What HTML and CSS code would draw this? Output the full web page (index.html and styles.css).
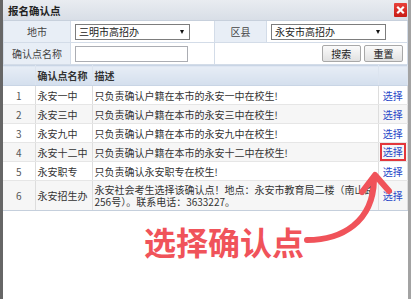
FILE: index.html
```html
<!DOCTYPE html>
<html lang="zh-CN">

<head>
    <meta charset="UTF-8">
    <title>报名确认点</title>
    <link rel="stylesheet" href="styles.css">
</head>

<body>
    <div class="dialog">
        <div class="title-bar">
            <span class="title">报名确认点</span>
            <span class="close">
                <svg width="13" height="14" viewBox="0 0 13 14">
                    <path d="M4 4.5 L9 9.5 M9 4.5 L4 9.5" stroke="#fff" stroke-width="2.2" stroke-linecap="square" />
                </svg>
            </span>
        </div>

        <table class="search">
            <colgroup>
                <col style="width:67px">
                <col style="width:144px">
                <col style="width:52px">
                <col>
            </colgroup>
            <tr>
                <th>地市</th>
                <td><div class="select">三明市高招办<span class="caret"></span></div></td>
                <th>区县</th>
                <td><div class="select">永安市高招办<span class="caret"></span></div></td>
            </tr>
            <tr>
                <th>确认点名称</th>
                <td><div class="input"></div></td>
                <td colspan="2" class="actions">
                    <button>搜索</button>
                    <button>重置</button>
                </td>
            </tr>
        </table>

        <table class="list">
            <colgroup>
                <col style="width:32px">
                <col style="width:57px">
                <col style="width:286px">
                <col>
            </colgroup>
            <thead>
                <tr>
                    <th></th>
                    <th>确认点名称</th>
                    <th>描述</th>
                    <th></th>
                </tr>
            </thead>
            <tbody>
                <tr>
                    <td class="num">1</td>
                    <td>永安一中</td>
                    <td>只负责确认户籍在本市的永安一中在校生!</td>
                    <td class="pick"><a href="#">选择</a></td>
                </tr>
                <tr>
                    <td class="num">2</td>
                    <td>永安三中</td>
                    <td>只负责确认户籍在本市的永安三中在校生!</td>
                    <td class="pick"><a href="#">选择</a></td>
                </tr>
                <tr>
                    <td class="num">3</td>
                    <td>永安九中</td>
                    <td>只负责确认户籍在本市的永安九中在校生!</td>
                    <td class="pick"><a href="#">选择</a></td>
                </tr>
                <tr>
                    <td class="num">4</td>
                    <td>永安十二中</td>
                    <td>只负责确认户籍在本市的永安十二中在校生!</td>
                    <td class="pick"><a href="#" class="marked">选择</a></td>
                </tr>
                <tr>
                    <td class="num">5</td>
                    <td>永安职专</td>
                    <td>只负责确认永安职专在校生!</td>
                    <td class="pick"><a href="#">选择</a></td>
                </tr>
                <tr class="tall">
                    <td class="num">6</td>
                    <td>永安招生办</td>
                    <td>永安社会考生选择该确认点！地点：永安市教育局二楼（南山路256号）。联系电话：3633227。</td>
                    <td class="pick"><a href="#">选择</a></td>
                </tr>
            </tbody>
        </table>

        <div class="note">选择确认点</div>
        <svg class="arrow" width="405" height="299" viewBox="3 0 405 299">
            <path d="M307 240 C342 240, 373 222, 374 180" fill="none" stroke="#f0535a" stroke-width="6" stroke-linecap="round" />
            <path d="M362 192 L375 175 L389 191" fill="none" stroke="#f0535a" stroke-width="6" stroke-linecap="round" stroke-linejoin="round" />
        </svg>
    </div>
</body>

</html>
```

FILE: styles.css
```css
body {
    margin: 0;
    padding: 0;
    font-family: "Noto Sans CJK SC", "Liberation Sans", sans-serif;
    font-size: 10px;
    color: #333;
    background-color: #fff;
}

.dialog {
    position: relative;
    width: 405px;
    height: 299px;
    border-left: 3px solid #666;
    border-right: 3px solid #a3a3a3;
    background-color: #fff;
    overflow: hidden;
}

.title-bar {
    height: 20px;
    display: flex;
    align-items: center;
    justify-content: space-between;
    padding: 0 1px 0 5px;
    border-bottom: 1px solid #c7d0dc;
    background: linear-gradient(#e9ecf1, #d8dee7);
}

.title {
    font-weight: bold;
    font-size: 10.5px;
    color: #222;
}

.close {
    display: flex;
    width: 13px;
    height: 14px;
    background: linear-gradient(#e8403a, #c81c16);
    border-radius: 1px;
}

.search {
    width: 100%;
    border-collapse: collapse;
    table-layout: fixed;
}

.search th,
.search td {
    height: 21px;
    padding: 0 4px;
    border: 1px solid #d3dce8;
}

.search tr:first-child th,
.search tr:first-child td {
    border-top: none;
}

.search th {
    background-color: #e8eef6;
    font-weight: normal;
    color: #444;
    text-align: center;
}

.select {
    position: relative;
    width: 110px;
    height: 14px;
    line-height: 14px;
    padding-left: 3px;
    border: 1px solid #7d7d7d;
    color: #222;
    background-color: #fff;
}

.caret {
    position: absolute;
    right: 5px;
    top: 5px;
    border-left: 2.5px solid transparent;
    border-right: 2.5px solid transparent;
    border-top: 4px solid #111;
}

.input {
    width: 111px;
    height: 14px;
    border: 1px solid #abadb3;
    background-color: #fff;
}

.actions {
    text-align: right;
}

.actions button {
    width: 39px;
    height: 17px;
    margin-left: 1px;
    padding: 0;
    font-family: inherit;
    font-size: 10px;
    color: #222;
    border: 1px solid #a8a8a8;
    border-radius: 2px;
    background: linear-gradient(#fbfbfb, #e1e1e1);
}

.list {
    width: 100%;
    border-collapse: collapse;
    table-layout: fixed;
}

.list th {
    height: 19px;
    padding: 0 2px;
    text-align: left;
    font-weight: bold;
    color: #333;
    border-top: 1px solid #c9d5e5;
    border-bottom: 1px solid #c9d5e5;
    border-right: 1px solid #dce4ef;
    background: linear-gradient(#e7edf6, #d4dfed);
}

.list td {
    height: 18px;
    padding: 0 2px;
    border-right: 1px solid #dddddd;
    border-bottom: 1px solid #e6e6e6;
    white-space: nowrap;
}

.list tbody tr:nth-child(even) td {
    background-color: #f6f6f6;
}

.list tbody tr:last-child td {
    border-bottom: 1px solid #c5cfdc;
}

.list .tall td {
    height: 29px;
    line-height: 12px;
    white-space: normal;
}

.list .num {
    text-align: center;
    color: #555;
}

.list .pick {
    text-align: center;
    padding: 0;
}

.pick a {
    color: #2747c7;
    text-decoration: none;
}

.pick .marked {
    display: inline-block;
    line-height: 12px;
    padding: 1px 1px;
    border: 2px solid #e3363b;
}

.note {
    position: absolute;
    left: 141px;
    top: 225px;
    font-size: 32px;
    line-height: 32px;
    font-weight: bold;
    color: #f0535a;
}

.arrow {
    position: absolute;
    left: 0;
    top: 0;
}
```
